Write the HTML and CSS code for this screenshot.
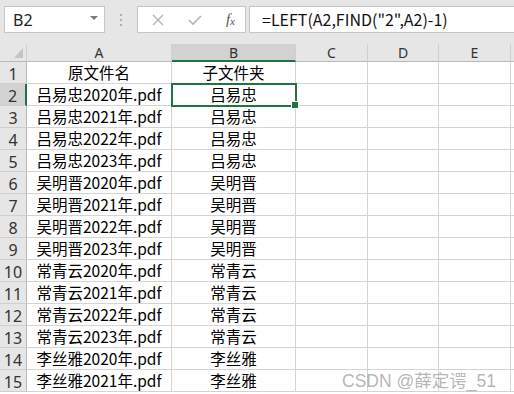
FILE: index.html
```html
<!DOCTYPE html>
<html>
<head>
<meta charset="utf-8">
<link rel="stylesheet" href="styles.css">
</head>
<body>
<div class="app">
  <div class="toolbar">
    <div class="namebox">
      <span class="ref">B2</span>
      <span class="caret"></span>
    </div>
    <div class="dots"><i></i><i></i><i></i></div>
    <div class="fxbox">
      <svg class="ico" width="14" height="14" viewBox="0 0 14 14"><path d="M2 2 L12 12 M12 2 L2 12" stroke="#b4b4b4" stroke-width="1.4" fill="none"/></svg>
      <svg class="ico" width="16" height="14" viewBox="0 0 16 14"><path d="M2 7 L6 11 L14 3" stroke="#b4b4b4" stroke-width="1.6" fill="none"/></svg>
      <span class="fx">f<sub>x</sub></span>
    </div>
    <div class="formula">=LEFT(A2,FIND("2",A2)-1)</div>
  </div>
  <div class="sheet">
    <div class="corner"><span class="tri"></span></div>
    <div class="ch">A</div>
    <div class="ch sel">B</div>
    <div class="ch">C</div>
    <div class="ch">D</div>
    <div class="ch">E</div>
    <div class="ch last"></div>

    <div class="rh">1</div><div class="c">原文件名</div><div class="c">子文件夹</div><div class="c"></div><div class="c"></div><div class="c"></div><div class="c last"></div>
    <div class="rh sel">2</div><div class="c">吕易忠2020年.pdf</div><div class="c active">吕易忠<span class="handle"></span></div><div class="c"></div><div class="c"></div><div class="c"></div><div class="c last"></div>
    <div class="rh">3</div><div class="c">吕易忠2021年.pdf</div><div class="c">吕易忠</div><div class="c"></div><div class="c"></div><div class="c"></div><div class="c last"></div>
    <div class="rh">4</div><div class="c">吕易忠2022年.pdf</div><div class="c">吕易忠</div><div class="c"></div><div class="c"></div><div class="c"></div><div class="c last"></div>
    <div class="rh">5</div><div class="c">吕易忠2023年.pdf</div><div class="c">吕易忠</div><div class="c"></div><div class="c"></div><div class="c"></div><div class="c last"></div>
    <div class="rh">6</div><div class="c">吴明晋2020年.pdf</div><div class="c">吴明晋</div><div class="c"></div><div class="c"></div><div class="c"></div><div class="c last"></div>
    <div class="rh">7</div><div class="c">吴明晋2021年.pdf</div><div class="c">吴明晋</div><div class="c"></div><div class="c"></div><div class="c"></div><div class="c last"></div>
    <div class="rh">8</div><div class="c">吴明晋2022年.pdf</div><div class="c">吴明晋</div><div class="c"></div><div class="c"></div><div class="c"></div><div class="c last"></div>
    <div class="rh">9</div><div class="c">吴明晋2023年.pdf</div><div class="c">吴明晋</div><div class="c"></div><div class="c"></div><div class="c"></div><div class="c last"></div>
    <div class="rh">10</div><div class="c">常青云2020年.pdf</div><div class="c">常青云</div><div class="c"></div><div class="c"></div><div class="c"></div><div class="c last"></div>
    <div class="rh">11</div><div class="c">常青云2021年.pdf</div><div class="c">常青云</div><div class="c"></div><div class="c"></div><div class="c"></div><div class="c last"></div>
    <div class="rh">12</div><div class="c">常青云2022年.pdf</div><div class="c">常青云</div><div class="c"></div><div class="c"></div><div class="c"></div><div class="c last"></div>
    <div class="rh">13</div><div class="c">常青云2023年.pdf</div><div class="c">常青云</div><div class="c"></div><div class="c"></div><div class="c"></div><div class="c last"></div>
    <div class="rh">14</div><div class="c">李丝雅2020年.pdf</div><div class="c">李丝雅</div><div class="c"></div><div class="c"></div><div class="c"></div><div class="c last"></div>
    <div class="rh">15</div><div class="c">李丝雅2021年.pdf</div><div class="c">李丝雅</div><div class="c"></div><div class="c"></div><div class="c"></div><div class="c last"></div>
  </div>
  <div class="watermark">CSDN @薛定谔_51</div>
</div>
</body>
</html>
```
FILE: styles.css
```css
* { box-sizing: border-box; }
html, body { margin: 0; padding: 0; }
body {
  width: 514px;
  height: 394px;
  overflow: hidden;
  background: #ffffff;
  font-family: "Noto Sans CJK SC", "Noto Sans", sans-serif;
}
.app {
  position: relative;
  width: 514px;
  height: 394px;
  overflow: hidden;
}
.toolbar {
  height: 44px;
  background: #e6e6e6;
  display: flex;
  align-items: flex-start;
  padding: 6px 0 0 4px;
}
.namebox {
  width: 101px;
  height: 27px;
  background: #fff;
  border: 1px solid #c6c6c6;
  display: flex;
  align-items: center;
  justify-content: space-between;
  padding: 0 6px 0 8px;
}
.ref {
  font-family: "Noto Sans", sans-serif;
  font-size: 16px;
  color: #222;
  line-height: 1;
}
.caret {
  width: 0; height: 0;
  border-left: 4px solid transparent;
  border-right: 4px solid transparent;
  border-top: 4px solid #7a7a7a;
  margin-top: -4px;
}
.dots {
  width: 32px;
  height: 27px;
  display: flex;
  flex-direction: column;
  align-items: center;
  justify-content: center;
  gap: 3px;
}
.dots i {
  display: block;
  width: 2px; height: 2px;
  background: #b0b0b0;
}
.fxbox {
  width: 109px;
  height: 27px;
  background: #fff;
  border: 1px solid #c6c6c6;
  display: flex;
  align-items: center;
  padding: 0 10px 0 13px;
  justify-content: space-between;
}
.ico { display: block; }
.fx {
  font-family: "Liberation Serif", serif;
  font-style: italic;
  font-size: 15px;
  color: #555;
  line-height: 1;
}
.fx sub { font-size: 11px; vertical-align: -1px; }
.formula {
  margin-left: 3px;
  flex: 1;
  height: 27px;
  background: #fff;
  border: 1px solid #c6c6c6;
  border-right: none;
  padding-left: 12px;
  font-size: 16px;
  line-height: 25px;
  color: #111;
  white-space: nowrap;
}
.sheet {
  display: grid;
  grid-template-columns: 27px 145px 124px 72px 71px 72px 1fr;
  grid-template-rows: 18px repeat(15, 22px);
}
.corner {
  background: #e6e6e6;
  border-right: 1px solid #cfcfcf;
  border-bottom: 1px solid #b9b9b9;
  position: relative;
}
.tri {
  position: absolute;
  right: 3px;
  bottom: 3px;
  width: 0; height: 0;
  border-left: 9px solid transparent;
  border-bottom: 10px solid #c4c4c4;
}
.ch {
  background: #e6e6e6;
  border-right: 1px solid #cfcfcf;
  border-bottom: 1px solid #b9b9b9;
  text-align: center;
  font-family: "Noto Sans", sans-serif;
  font-size: 14px;
  color: #333;
  line-height: 17px;
}
.ch.sel {
  background: #d2d2d2;
  border-bottom: 2px solid #217346;
}
.ch.last { border-right: none; }
.rh {
  background: #e6e6e6;
  border-right: 1px solid #b9b9b9;
  border-bottom: 1px solid #cfcfcf;
  font-family: "Noto Sans", sans-serif;
  font-size: 16px;
  color: #333;
  line-height: 21px;
  padding-top: 2px;
  text-align: center;
}
.rh.sel {
  background: #d2d2d2;
  border-right: 2px solid #217346;
}
.c {
  border-right: 1px solid #d4d4d4;
  border-bottom: 1px solid #d4d4d4;
  text-align: center;
  font-size: 15.5px;
  color: #000;
  line-height: 21px;
  white-space: nowrap;
  position: relative;
}
.c.last { border-right: none; }
.c.active {
  outline: 2px solid #217346;
  outline-offset: -1px;
  z-index: 2;
}
.handle {
  position: absolute;
  right: -4px;
  bottom: -4px;
  width: 6px;
  height: 6px;
  background: #217346;
  border: 1px solid #fff;
  box-sizing: content-box;
}
.watermark {
  position: absolute;
  left: 342px;
  top: 367px;
  font-family: "Liberation Sans", "Noto Sans CJK SC", sans-serif;
  font-size: 17.5px;
  color: rgba(140, 140, 140, 0.65);
  white-space: nowrap;
}
```
